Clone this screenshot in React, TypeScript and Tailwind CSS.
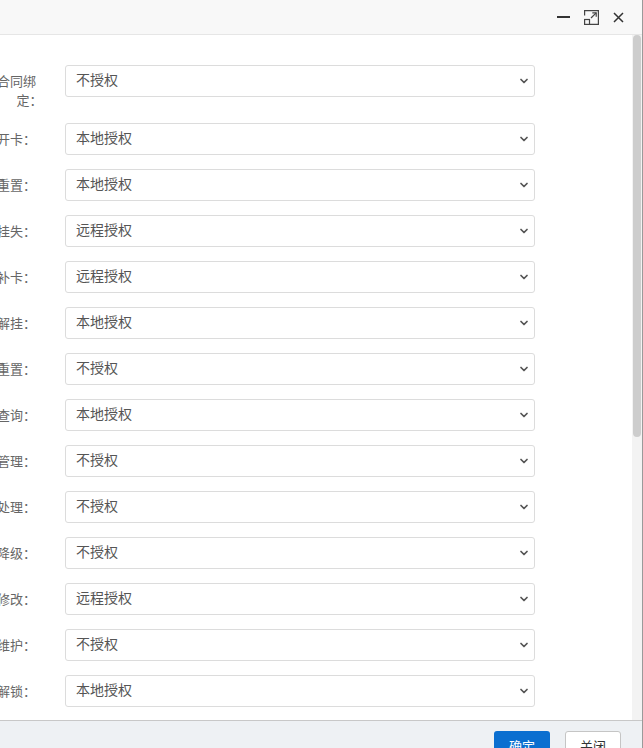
import { ChevronDown } from 'lucide-react'

interface PermRow {
  label: string[]
  value: string
}

const rows: PermRow[] = [
  { label: ['人员合同绑', '定：'], value: '不授权' },
  { label: ['卡片开卡：'], value: '本地授权' },
  { label: ['密码重置：'], value: '本地授权' },
  { label: ['卡片挂失：'], value: '远程授权' },
  { label: ['卡片补卡：'], value: '远程授权' },
  { label: ['卡片解挂：'], value: '本地授权' },
  { label: ['密码重置：'], value: '不授权' },
  { label: ['余额查询：'], value: '本地授权' },
  { label: ['账户管理：'], value: '不授权' },
  { label: ['异常处理：'], value: '不授权' },
  { label: ['权限降级：'], value: '不授权' },
  { label: ['资料修改：'], value: '远程授权' },
  { label: ['设备维护：'], value: '不授权' },
  { label: ['账户解锁：'], value: '本地授权' },
]

const options = ['不授权', '本地授权', '远程授权']

function MaximizeIcon() {
  return (
    <svg width="15" height="15" viewBox="0 0 15 15" fill="none" stroke="#444" strokeWidth="1.2">
      <path d="M0.6 5.5V0.6H14.4V14.4H5.5" />
      <rect x="0.6" y="9.5" width="4.9" height="4.9" />
      <path d="M7 8L12.2 2.8" />
      <path d="M8.3 2.8H12.2V6.7" />
    </svg>
  )
}

function CloseIcon() {
  return (
    <svg width="11" height="11" viewBox="0 0 11 11" fill="none" stroke="#333" strokeWidth="1.5">
      <path d="M1 1L10 10M10 1L1 10" />
    </svg>
  )
}

function SelectField({ value }: { value: string }) {
  return (
    <div className="relative ml-[29px] h-8 w-[470px]">
      <select
        defaultValue={value}
        className="h-8 w-full appearance-none rounded-[3px] border border-[#dcdcdc] bg-white pb-[3px] pl-[10px] pr-6 text-[14px] text-[#555] outline-none"
      >
        {options.map((o) => (
          <option key={o}>{o}</option>
        ))}
      </select>
      <ChevronDown
        className="pointer-events-none absolute right-[5px] top-[10px] h-3 w-3 text-[#555]"
        strokeWidth={3.5}
      />
    </div>
  )
}

export default function App() {
  return (
    <div className="flex h-[748px] w-[643px] flex-col overflow-hidden border-r border-[#9a9a9a] bg-white font-['Noto_Sans_CJK_SC','Noto_Sans',sans-serif]">
      {/* title bar */}
      <div className="flex h-[35px] shrink-0 items-center justify-end border-b border-[#e6e6e6] bg-[#f8f8f8] pr-[18px]">
        <span className="mr-[14px] h-[2px] w-[13px] bg-[#333]" />
        <span className="mr-[14px] flex">
          <MaximizeIcon />
        </span>
        <CloseIcon />
      </div>

      {/* body */}
      <div className="flex h-[685px] shrink-0">
        <div className="flex-1 overflow-hidden pt-[30px]">
          {rows.map((row, i) => (
            <div key={i} className="mb-[14px] flex items-start">
              <div
                className={
                  row.label.length > 1
                    ? "-ml-[74px] w-[110px] shrink-0 pt-[6px] text-right text-[13px] leading-[19px] text-[#666] [font-feature-settings:'halt']"
                    : '-ml-[74px] w-[110px] shrink-0 pt-[6px] text-right text-[13px] leading-[19px] text-[#666]'
                }
              >
                {row.label.map((line, j) => (
                  <div key={j} className="whitespace-nowrap">{line}</div>
                ))}
              </div>
              <SelectField value={row.value} />
            </div>
          ))}
        </div>
        {/* scrollbar */}
        <div className="w-[10px] shrink-0 bg-[#f3f3f3] pl-[1px]">
          <div className="h-[402px] w-[8px] rounded-full bg-[#cdcdcd]" />
        </div>
      </div>

      {/* footer */}
      <div className="flex shrink-0 justify-end gap-[15px] border-t border-[#c8c8c8] bg-[#eef1f4] pb-4 pl-4 pr-[21px] pt-[10px]">
        <button className="h-[30px] w-[56px] rounded-[3px] bg-[#0b6fd0] text-[13px] text-white">确定</button>
        <button className="h-[30px] w-[56px] rounded-[3px] border border-[#c5c5c5] bg-white text-[13px] text-[#333]">关闭</button>
      </div>
    </div>
  )
}
